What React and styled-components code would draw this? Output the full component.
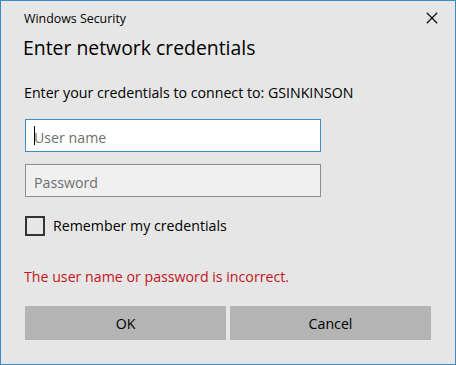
import React from "react";
import styled, { createGlobalStyle } from "styled-components";

const GlobalStyle = createGlobalStyle`
  html, body { margin: 0; padding: 0; background: #e6e6e6; }
  body { font-family: "Open Sans", "Noto Sans", sans-serif; }
`;

const Window = styled.div`
  box-sizing: border-box;
  width: 456px;
  height: 365px;
  border: 1px solid #3a8cc6;
  background: #e6e6e6;
  color: #000;
  display: flex;
  flex-direction: column;
`;

const TitleBar = styled.div`
  display: flex;
  justify-content: space-between;
  align-items: flex-start;
  height: 34px;
`;

const Caption = styled.div`
  padding: 10px 0 0 23px;
  font-size: 12.4px;
  line-height: 15px;
  color: #000;
`;

const CloseButton = styled.button`
  width: 46px;
  height: 34px;
  border: 0;
  padding: 0;
  background: transparent;
  display: flex;
  align-items: center;
  justify-content: center;
  cursor: default;
`;

const Body = styled.div`
  display: flex;
  flex-direction: column;
  padding: 0 23px 0 24px;
`;

const Heading = styled.h1`
  margin: 0 0 0 -2px;
  font-size: 19.4px;
  font-weight: 400;
  line-height: 26px;
`;

const Text = styled.p`
  margin: ${(p) => p.$top}px 0 0 -1px;
  font-size: 14.2px;
  line-height: 20px;
  color: ${(p) => p.$color || "#000"};
`;

const FieldWrap = styled.div`
  position: relative;
  width: 296px;
  margin-top: ${(p) => p.$top}px;
`;

const Field = styled.input`
  box-sizing: border-box;
  display: block;
  width: 296px;
  height: 33px;
  margin: 0;
  padding: 4px 8px 0 8px;
  border: 1px solid ${(p) => (p.$focused ? "#3c8ec4" : "#8e8e8e")};
  background: ${(p) => (p.$focused ? "#ffffff" : "#f0f0f0")};
  font-family: "Open Sans", "Noto Sans", sans-serif;
  font-size: 14.2px;
  color: #000;
  outline: none;
  &::placeholder { color: #6f6f6f; opacity: 1; }
`;

const Caret = styled.span`
  position: absolute;
  left: 9px;
  top: 7px;
  width: 1px;
  height: 19px;
  background: #000;
`;

const CheckRow = styled.label`
  display: flex;
  align-items: center;
  gap: 8px;
  margin-top: 19px;
  height: 20px;
  font-size: 14.2px;
  line-height: 20px;
`;

const Box = styled.span`
  box-sizing: border-box;
  width: 20px;
  height: 20px;
  border: 2px solid #333333;
  background: transparent;
  flex: none;
`;

const Buttons = styled.div`
  display: grid;
  grid-template-columns: 201px 201px;
  gap: 4px;
  margin-top: 19px;
`;

const Button = styled.button`
  height: 34px;
  border: 0;
  margin: 0;
  padding: 0;
  background: #b4b4b4;
  font-family: "Open Sans", "Noto Sans", sans-serif;
  font-size: 14.2px;
  color: #000;
  cursor: default;
`;

export default function App() {
  return (
    <>
      <GlobalStyle />
      <Window>
        <TitleBar>
          <Caption>Windows Security</Caption>
          <CloseButton aria-label="Close">
            <svg width="12" height="12" viewBox="0 0 12 12">
              <path d="M0.8 0.8 L11.2 11.2 M11.2 0.8 L0.8 11.2" stroke="#111" strokeWidth="1.3" fill="none" />
            </svg>
          </CloseButton>
        </TitleBar>
        <Body>
          <Heading>Enter network credentials</Heading>
          <Text $top={22}>Enter your credentials to connect to: GSINKINSON</Text>
          <FieldWrap $top={16}>
            <Field $focused placeholder="User name" />
            <Caret />
          </FieldWrap>
          <FieldWrap $top={12}>
            <Field type="password" placeholder="Password" />
          </FieldWrap>
          <CheckRow>
            <Box />
            <span>Remember my credentials</span>
          </CheckRow>
          <Text $top={31} $color="#c4141b">The user name or password is incorrect.</Text>
          <Buttons>
            <Button>OK</Button>
            <Button>Cancel</Button>
          </Buttons>
        </Body>
      </Window>
    </>
  );
}
